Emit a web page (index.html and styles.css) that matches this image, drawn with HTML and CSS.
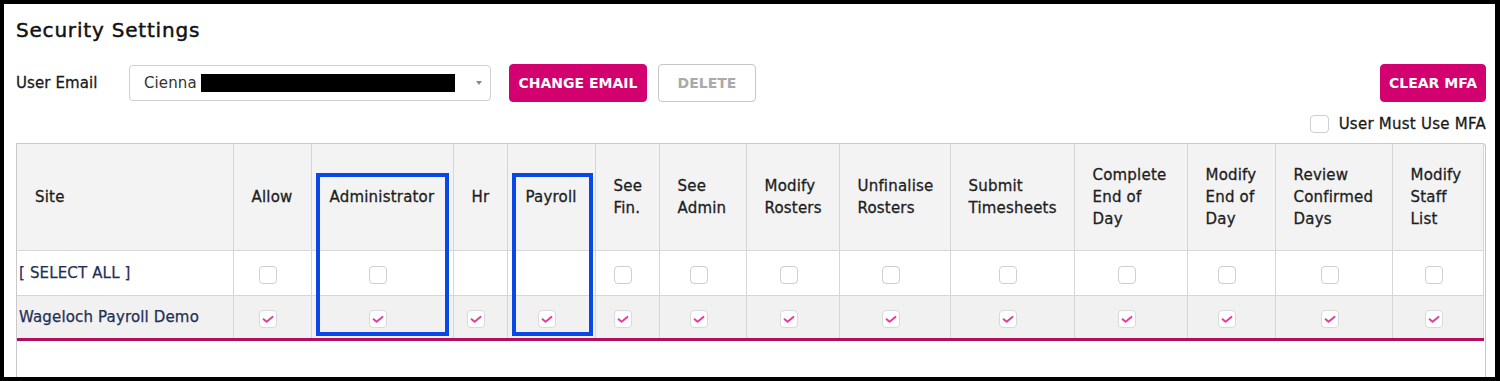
FILE: index.html
```html
<!DOCTYPE html>
<html lang="en">
<head>
<meta charset="utf-8">
<title>Security Settings</title>
<link rel="stylesheet" href="styles.css">
</head>
<body>
<div class="page">
  <h1 class="title">Security Settings</h1>

  <div class="email-row">
    <label class="label">User Email</label>
    <div class="select">
      <span class="select-text">Cienna</span>
      <span class="redact"></span>
      <span class="caret"></span>
    </div>
    <button class="btn btn-primary btn-change">CHANGE EMAIL</button>
    <button class="btn btn-outline btn-delete">DELETE</button>
    <button class="btn btn-primary btn-clear">CLEAR MFA</button>
  </div>

  <div class="mfa-row">
    <span class="cb"></span>
    <span class="mfa-text">User Must Use MFA</span>
  </div>

  <div class="table-wrap">
    <table class="perm-table">
      <colgroup>
        <col class="col-site">
        <col class="col-allow">
        <col class="col-admin">
        <col class="col-hr">
        <col class="col-payroll">
        <col class="col-seefin">
        <col class="col-seeadmin">
        <col class="col-modros">
        <col class="col-unfin">
        <col class="col-submit">
        <col class="col-complete">
        <col class="col-modeod">
        <col class="col-review">
        <col class="col-staff">
      </colgroup>
      <thead>
        <tr>
          <th>Site</th>
          <th>Allow</th>
          <th>Administrator</th>
          <th>Hr</th>
          <th>Payroll</th>
          <th>See<br>Fin.</th>
          <th>See<br>Admin</th>
          <th>Modify<br>Rosters</th>
          <th>Unfinalise<br>Rosters</th>
          <th>Submit<br>Timesheets</th>
          <th>Complete<br>End of<br>Day</th>
          <th>Modify<br>End of<br>Day</th>
          <th>Review<br>Confirmed<br>Days</th>
          <th>Modify<br>Staff<br>List</th>
        </tr>
      </thead>
      <tbody>
        <tr class="row-select">
          <td class="site">[ SELECT ALL ]</td>
          <td class="chk"><span class="cb"></span></td>
          <td class="chk"><span class="cb"></span></td>
          <td class="chk"></td>
          <td class="chk"></td>
          <td class="chk"><span class="cb"></span></td>
          <td class="chk"><span class="cb"></span></td>
          <td class="chk"><span class="cb"></span></td>
          <td class="chk"><span class="cb"></span></td>
          <td class="chk"><span class="cb"></span></td>
          <td class="chk"><span class="cb"></span></td>
          <td class="chk"><span class="cb"></span></td>
          <td class="chk"><span class="cb"></span></td>
          <td class="chk"><span class="cb"></span></td>
        </tr>
        <tr class="row-data">
          <td class="site">Wageloch Payroll Demo</td>
          <td class="chk"><span class="cb cb-on"><svg viewBox="0 0 16 16" width="16" height="16"><path d="M3.6 8.2 L6.6 10.8 L12.4 5.9"/></svg></span></td>
          <td class="chk"><span class="cb cb-on"><svg viewBox="0 0 16 16" width="16" height="16"><path d="M3.6 8.2 L6.6 10.8 L12.4 5.9"/></svg></span></td>
          <td class="chk"><span class="cb cb-on"><svg viewBox="0 0 16 16" width="16" height="16"><path d="M3.6 8.2 L6.6 10.8 L12.4 5.9"/></svg></span></td>
          <td class="chk"><span class="cb cb-on"><svg viewBox="0 0 16 16" width="16" height="16"><path d="M3.6 8.2 L6.6 10.8 L12.4 5.9"/></svg></span></td>
          <td class="chk"><span class="cb cb-on"><svg viewBox="0 0 16 16" width="16" height="16"><path d="M3.6 8.2 L6.6 10.8 L12.4 5.9"/></svg></span></td>
          <td class="chk"><span class="cb cb-on"><svg viewBox="0 0 16 16" width="16" height="16"><path d="M3.6 8.2 L6.6 10.8 L12.4 5.9"/></svg></span></td>
          <td class="chk"><span class="cb cb-on"><svg viewBox="0 0 16 16" width="16" height="16"><path d="M3.6 8.2 L6.6 10.8 L12.4 5.9"/></svg></span></td>
          <td class="chk"><span class="cb cb-on"><svg viewBox="0 0 16 16" width="16" height="16"><path d="M3.6 8.2 L6.6 10.8 L12.4 5.9"/></svg></span></td>
          <td class="chk"><span class="cb cb-on"><svg viewBox="0 0 16 16" width="16" height="16"><path d="M3.6 8.2 L6.6 10.8 L12.4 5.9"/></svg></span></td>
          <td class="chk"><span class="cb cb-on"><svg viewBox="0 0 16 16" width="16" height="16"><path d="M3.6 8.2 L6.6 10.8 L12.4 5.9"/></svg></span></td>
          <td class="chk"><span class="cb cb-on"><svg viewBox="0 0 16 16" width="16" height="16"><path d="M3.6 8.2 L6.6 10.8 L12.4 5.9"/></svg></span></td>
          <td class="chk"><span class="cb cb-on"><svg viewBox="0 0 16 16" width="16" height="16"><path d="M3.6 8.2 L6.6 10.8 L12.4 5.9"/></svg></span></td>
          <td class="chk"><span class="cb cb-on"><svg viewBox="0 0 16 16" width="16" height="16"><path d="M3.6 8.2 L6.6 10.8 L12.4 5.9"/></svg></span></td>
        </tr>
      </tbody>
    </table>
    <div class="hl hl-admin"></div>
    <div class="hl hl-payroll"></div>
  </div>
</div>
</body>
</html>
```
FILE: styles.css
```css
* { box-sizing: border-box; }

html, body { margin: 0; }

body {
  background: #000;
  padding: 4px 5px 4px 4px;
  height: 381px;
  overflow: hidden;
  font-family: "DejaVu Sans", "Liberation Sans", sans-serif;
  color: #222;
}

.page {
  background: #fff;
  height: 373px;
  overflow: hidden;
  padding: 14px 9px 0 12px;
}

.title {
  margin: 0;
  font-size: 20px;
  line-height: 24px;
  font-weight: normal;
  letter-spacing: 0.8px;
  color: #111;
  -webkit-text-stroke: 0.45px #111;
}

.email-row {
  display: flex;
  align-items: center;
  margin-top: 22px;
  height: 38px;
}

.label {
  width: 113px;
  font-size: 15px;
  color: #1a1a1a;
  letter-spacing: 0.1px;
  -webkit-text-stroke: 0.3px #1a1a1a;
}

.select {
  width: 362px;
  height: 36px;
  border: 1px solid #cfcfcf;
  border-radius: 4px;
  display: flex;
  align-items: center;
  padding: 0 8px 0 14px;
}

.select-text {
  font-size: 15px;
  color: #333;
  letter-spacing: 0.1px;
}

.redact {
  display: inline-block;
  width: 254px;
  height: 18px;
  margin-left: 4px;
  background: #000;
}

.caret {
  margin-left: auto;
  width: 0;
  height: 0;
  border-top: 4px solid #888;
  border-left: 3.5px solid transparent;
  border-right: 3.5px solid transparent;
}

.btn {
  height: 38px;
  border-radius: 4px;
  font-family: "DejaVu Sans", "Liberation Sans", sans-serif;
  font-size: 14px;
  font-weight: bold;
  text-align: center;
  padding: 0;
  cursor: pointer;
}

.btn-primary {
  background: #d3006f;
  border: 1px solid #d3006f;
  color: #fff;
}

.btn-outline {
  background: #fff;
  border: 1px solid #c6c6c6;
  color: #aaa;
}

.btn-change { width: 138px; margin-left: 18px; }
.btn-delete { width: 98px; margin-left: 11px; }
.btn-clear { width: 106px; margin-left: auto; }

.mfa-row {
  display: flex;
  justify-content: flex-end;
  align-items: center;
  gap: 10px;
  margin-top: 11px;
  height: 21px;
}

.mfa-text {
  font-size: 15px;
  letter-spacing: 0.25px;
  color: #1a1a1a;
  -webkit-text-stroke: 0.3px #1a1a1a;
}

.table-wrap {
  position: relative;
  margin-top: 9px;
  height: 260px;
  border: 1px solid #c9c9c9;
  border-bottom: none;
  border-radius: 0 4px 0 0;
  background: #fff;
}

.perm-table {
  border-collapse: collapse;
  table-layout: fixed;
  width: 1466px;
}

.col-site { width: 216px; }
.col-allow { width: 78px; }
.col-admin { width: 142px; }
.col-hr { width: 54px; }
.col-payroll { width: 88px; }
.col-seefin { width: 64px; }
.col-seeadmin { width: 87px; }
.col-modros { width: 93px; }
.col-unfin { width: 111px; }
.col-submit { width: 124px; }
.col-complete { width: 113px; }
.col-modeod { width: 88px; }
.col-review { width: 117px; }
.col-staff { width: 91px; }

.perm-table th,
.perm-table td {
  border-right: 1px solid #d6d6d6;
  border-bottom: 1px solid #d6d6d6;
  padding: 0;
}

.perm-table th {
  height: 106px;
  background: #f3f3f3;
  padding: 0 18px;
  text-align: left;
  vertical-align: middle;
  font-weight: normal;
  font-size: 15px;
  line-height: 22px;
  letter-spacing: 0.2px;
  color: #1e1e1e;
  white-space: nowrap;
  -webkit-text-stroke: 0.3px #1e1e1e;
}

.row-select td { height: 45px; background: #fff; }
.row-data td {
  height: 44px;
  background: #f1f1f1;
  border-bottom: 3px solid #b10d62;
}

.perm-table td.site {
  padding: 0 2px;
  font-size: 15px;
  letter-spacing: 0.15px;
  color: #1f2f55;
  white-space: nowrap;
  -webkit-text-stroke: 0.25px #1f2f55;
}

.perm-table td.chk {
  padding: 4px 8px 0 0;
  vertical-align: middle;
}

.cb {
  display: block;
  width: 18px;
  height: 18px;
  border: 1px solid #cfcfcf;
  border-radius: 4px;
  background: #fff;
}

.mfa-row .cb { width: 19px; height: 18px; }

.perm-table .cb { margin: 0 auto; }

.cb-on { border-color: #dadada; }

.cb svg {
  display: block;
  fill: none;
  stroke: #e0409c;
  stroke-width: 2;
  stroke-linecap: round;
  stroke-linejoin: round;
}

.hl {
  position: absolute;
  border: 4px solid #0a48e6;
  pointer-events: none;
}

.hl-admin { left: 299px; top: 29px; width: 133px; height: 163px; }
.hl-payroll { left: 495px; top: 29px; width: 81px; height: 163px; }
```
